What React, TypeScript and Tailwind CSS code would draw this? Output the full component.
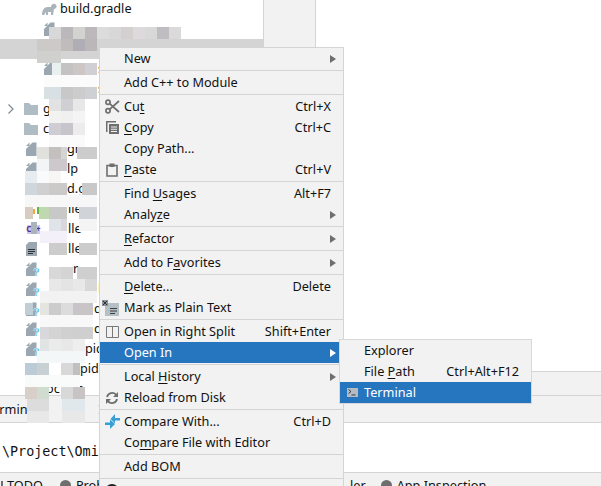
import type { ReactNode } from 'react';

const mosaic: [number, number, number, string][] = [
  // x, y, width, colour
  [49, 27, 12, '#d8d8d8'], [61, 27, 12, '#bab8ba'], [73, 27, 12, '#d2d2d0'], [85, 27, 12, '#bcb8bc'], [97, 27, 12, '#dcdcdc'],
  [109, 27, 12, '#d8d8d8'], [121, 27, 12, '#d4d0d0'], [133, 27, 12, '#dcdadc'], [145, 27, 12, '#d8d8d8'], [157, 27, 12, '#bfbcc2'], [169, 27, 12, '#dadada'],
  [37, 39, 24, '#cccac8'], [61, 39, 12, '#c0bcbc'], [73, 39, 12, '#b0aeb4'], [85, 39, 12, '#bbb6b8'], [37, 51, 24, '#d0d0ce'],
  [52, 63, 9, '#e8f0f0'], [61, 63, 12, '#c4c2c2'], [73, 63, 12, '#cdc6c6'], [85, 63, 12, '#d0d0d4'],
  [44, 75, 53, '#fbfbfb'],
  [44, 87, 17, '#d8e0e4'], [61, 87, 12, '#c8c8c8'], [73, 87, 12, '#cccccc'], [85, 87, 12, '#ced0d4'],
  [49, 99, 12, '#e2e2e2'], [61, 99, 12, '#d0d0d4'], [73, 99, 12, '#e8e8e8'],
  [49, 111, 12, '#f2f2f0'], [61, 111, 12, '#f0f0f0'], [73, 111, 12, '#f4f4f4'],
  [49, 123, 12, '#d0ccd4'], [61, 123, 12, '#c8c4cc'], [73, 123, 12, '#ececec'],
  [49, 135, 36, '#fafafa'],
  [37, 147, 12, '#e0e0dc'], [49, 147, 12, '#c4c0c0'], [61, 147, 6, '#d4d4d0'], [77, 147, 20, '#cccccc'],
  [37, 159, 12, '#f2f4f6'], [49, 159, 18, '#ccc8cc'],
  [25, 171, 12, '#e6ecf0'], [37, 171, 12, '#f8fafc'], [49, 171, 12, '#f8f6f4'],
  [25, 183, 12, '#cfd7da'], [37, 183, 12, '#d0d0d0'], [49, 183, 18, '#cccac8'], [82, 183, 15, '#c8c8c8'],
  [25, 195, 72, '#f7f7f7'],
  [25, 207, 8, '#d8ccc0'], [39, 207, 10, '#c0d8b0'], [49, 207, 18, '#c8c8c8'], [79, 207, 18, '#d0d4d8'],
  [49, 219, 12, '#e0e4e8'], [61, 219, 6, '#d8d8dc'], [79, 219, 18, '#f4f4f4'],
  [31, 222, 6, '#a9b4bb'],
  [40, 231, 27, '#f4f0fa'],
  [49, 243, 18, '#cccccc'], [79, 243, 18, '#cccccc'],
  [49, 267, 12, '#d8d8d8'], [61, 267, 12, '#d4d4d4'], [77, 267, 20, '#cfcfcf'],
  [49, 279, 12, '#e8e8e8'], [61, 279, 12, '#e4e4e4'], [73, 279, 12, '#e8e8e8'], [85, 279, 12, '#d8d8d8'],
  [40, 291, 57, '#f2f2f2'],
  [25, 303, 8, '#c0ced6'], [40, 303, 9, '#e4e4e0'], [49, 303, 12, '#cccccc'], [61, 303, 12, '#dcdcdc'], [73, 303, 20, '#c8c4c8'],
  [40, 315, 53, '#f8f8f8'],
  [40, 327, 9, '#d8d8dc'], [49, 327, 12, '#d4d4d4'], [61, 327, 12, '#d0d0d0'], [73, 327, 20, '#d0cfcf'],
  [40, 339, 9, '#e0e4e4'], [49, 339, 12, '#ecebeb'], [61, 339, 12, '#e8e8e8'], [73, 339, 12, '#eeeeee'],
  [37, 351, 48, '#f4f7f8'],
  [25, 363, 12, '#bcccd6'], [37, 363, 12, '#c8d0d4'], [61, 363, 12, '#d8d8d8'], [73, 363, 7, '#c0c0c0'],
  [25, 375, 55, '#f9fafa'],
  [25, 387, 12, '#d8d0c8'], [37, 387, 12, '#d0dcd0'], [61, 387, 12, '#d8d8d8'], [73, 387, 12, '#c8c4c4'],
  [27, 399, 22, '#dcdcdc'], [62, 399, 23, '#e0e8ec'],
  [27, 411, 22, '#e8e8e8'], [62, 411, 23, '#e8e8e8'],
];

function FileIcon({ children }: { children?: ReactNode }) {
  return (
    <svg width="14" height="15" viewBox="0 0 14 15" className="shrink-0">
      <path d="M6.500 0.500h4v13.500H0V7z" fill="#9aa7b0" />
      <path d="M0 4L3.500 0.500V4z" fill="#9aa7b0" />
      {children}
    </svg>
  );
}

const Question = () => (
  <text x="7" y="14" fontSize="11" fontWeight="700" fill="#40b6e0" fontFamily="Liberation Sans, sans-serif" stroke="#fff" strokeWidth="0.3">?</text>
);

const Folder = () => (
  <svg width="14" height="12" viewBox="0 0 14 12" className="shrink-0">
    <path d="M0 0h5l2 2h7v10H0z" fill="#b0bcc4" />
  </svg>
);

function TreeRow({ className, children }: { className?: string; children?: ReactNode }) {
  return <div className={`flex h-5 shrink-0 items-center whitespace-nowrap text-[#111] ${className ?? ''}`}>{children}</div>;
}

// one letter underlined, like a menu mnemonic
function Mn({ t }: { t: string }) {
  return <span className="underline decoration-1 underline-offset-2">{t}</span>;
}

function Arrow({ light }: { light?: boolean }) {
  return (
    <svg width="6" height="8" viewBox="0 0 6 8" className="shrink-0">
      <path d="M0 0l6 4-6 4z" fill={light ? '#ffffff' : '#6e6e6e'} />
    </svg>
  );
}

function Item({ icon, label, keys, arrow, active }: { icon?: ReactNode; label: ReactNode; keys?: string; arrow?: boolean; active?: boolean }) {
  return (
    <div className={`flex h-[21px] items-center ${active ? 'bg-[#2675bf] text-white' : 'text-[#111]'}`}>
      <span className="flex w-[24px] shrink-0 items-center justify-center">{icon}</span>
      <span className="flex-1 whitespace-nowrap">{label}</span>
      {keys && <span className="whitespace-nowrap pr-[12px]">{keys}</span>}
      {arrow && <span className="flex pr-[7px]"><Arrow light={active} /></span>}
    </div>
  );
}

const Sep = () => (
  <div className="flex h-[3px] items-center">
    <div className="h-px w-full bg-[#d4d4d4]" />
  </div>
);

const Scissors = () => (
  <svg width="15" height="15" viewBox="0 0 15 15" fill="none" stroke="#6e6e6e" strokeWidth="1.700">
    <circle cx="3" cy="3.200" r="2.100" />
    <circle cx="3" cy="11.800" r="2.100" />
    <path d="M4.600 4.600L14 13M4.600 10.400L14 2" />
  </svg>
);

const CopyIcon = () => (
  <svg width="13" height="13" viewBox="0 0 13 13">
    <path d="M0 0h10v1.500H1.500V11H0z" fill="#6e6e6e" />
    <path d="M3 3h10v10H3z" fill="#6e6e6e" />
    <path d="M5 5.500h6v1H5zM5 7.800h6v1H5zM5 10h6v1H5z" fill="#f2f2f2" />
  </svg>
);

const PasteIcon = () => (
  <svg width="12" height="14" viewBox="0 0 12 14" fill="none">
    <path d="M1 2.500h10v10.500H1z" stroke="#6e6e6e" strokeWidth="1.600" />
    <path d="M3.500 0.500h5v3.500h-5z" fill="#6e6e6e" />
  </svg>
);

const PlainText = () => (
  <svg width="18" height="16" viewBox="0 0 18 16" className="-ml-[3px]">
    <path d="M3 3h14v13H3z" fill="#b4bfc6" />
    <path d="M8 8h7v1H8zM8 10.500h7v1H8zM8 13h5v1H8z" fill="#3c4043" />
    <path d="M0 0h6v6H0z" fill="#8a9299" />
    <path d="M1 1l4 4M5 1L1 5" stroke="#2f3133" strokeWidth="1" />
  </svg>
);

const SplitIcon = () => (
  <svg width="13" height="12" viewBox="0 0 13 12" fill="none" stroke="#7a7a7a">
    <path d="M.5.500h12v11H.5zM6.500.500v11" />
  </svg>
);

const ReloadIcon = () => (
  <svg width="14" height="14" viewBox="0 0 14 14" fill="none">
    <path d="M2 6a5.200 5.200 0 0 1 9-2.400" stroke="#6e6e6e" strokeWidth="1.800" />
    <path d="M12 8a5.200 5.200 0 0 1-9 2.400" stroke="#6e6e6e" strokeWidth="1.800" />
    <path d="M13 1v5H8zM1 13V8h5z" fill="#6e6e6e" />
  </svg>
);

const CompareIcon = () => (
  <svg width="15" height="15" viewBox="0 0 15 15" fill="#389fd6">
    <path d="M0 8.500h6v2.500H0z" />
    <path d="M5 5.500L10 10 5 15z" />
    <path d="M9 4h6v2.500H9z" />
    <path d="M10 0v9.500L5.500 5z" />
  </svg>
);

const TerminalIcon = () => (
  <svg width="11" height="9" viewBox="0 0 11 9" className="ml-[1px]">
    <path d="M0 0h11v9H0z" fill="#b3bcc5" />
    <path d="M1.500 1.500L4 3.500 1.500 5.500" fill="none" stroke="#2b2f33" strokeWidth="0.900" />
    <path d="M4.500 6.500h4v.9h-4z" fill="#2b2f33" />
  </svg>
);

export default function App() {
  return (
    <div className="relative flex h-[486px] w-[601px] flex-col overflow-hidden bg-white font-['Noto_Sans',sans-serif] text-[12.7px]">
      {/* project tree + side panel */}
      <div className="flex h-[395px] shrink-0">
        <div className="flex w-[263px] shrink-0 flex-col">
          <div className="-mt-[1px] flex flex-col">
            <TreeRow className="pl-[42px]">
              <svg width="15" height="12" viewBox="0 0 15 12" className="mr-[3px] shrink-0">
                <path d="M0 12C0 7 2 4 6 4h3C9 2 11 0 13 1c2 1 2 3 1 4-1 1-2 1-2 1l-1 6H9V9H6v3H4V9l-2 3z" fill="#a9b4bb" />
              </svg>
              build.gradle
            </TreeRow>
            <TreeRow className="pl-[44px]"><FileIcon /></TreeRow>
            <TreeRow className="bg-[#d4d4d4]" />
            <TreeRow className="pl-[44px]"><FileIcon /><span className="ml-[40px]">s</span></TreeRow>
            <TreeRow className="pl-[44px]"><FileIcon /><span className="ml-[40px]">s</span></TreeRow>
            <TreeRow className="pl-[8px]">
              <svg width="6" height="10" viewBox="0 0 6 10" fill="none" stroke="#7f8b91" strokeWidth="1.200" className="mr-[10px] shrink-0"><path d="M.5.500L5 5 .5 9.500" /></svg>
              <Folder /><span className="ml-[5px]">g</span>
            </TreeRow>
            <TreeRow className="pl-[24px]"><Folder /><span className="ml-[5px]">c</span></TreeRow>
            <TreeRow className="pl-[26px]"><FileIcon /><span className="ml-[27px]">gn</span></TreeRow>
            <TreeRow className="pl-[26px]"><FileIcon /><span className="ml-[27px]">lp</span></TreeRow>
            <TreeRow className="pl-[26px]"><FileIcon /><span className="ml-[27px]">d.g</span></TreeRow>
            <TreeRow className="pl-[33px]">
              <svg width="7" height="10" viewBox="0 0 7 10" className="shrink-0"><path d="M0 5h2v5H0z" fill="#f4a83c" /><path d="M4 0h2.500v10H4z" fill="#62b543" /></svg>
              <span className="ml-[28px]">lle</span>
            </TreeRow>
            <TreeRow className="pl-[27px]">
              <span className="flex h-[9px] w-[13px] items-center justify-center bg-[#d4c4f4] text-[8px] font-bold leading-none text-[#4b3a86]">C++</span>
              <span className="ml-[28px]">lle</span>
            </TreeRow>
            <TreeRow className="pl-[26px]">
              <svg width="11" height="14" viewBox="0 0 11 14" className="shrink-0"><path d="M3 0h8v14H0V3z" fill="#9aa7b0" /><path d="M2 7h7v1H2zM2 9h7v1H2zM2 11h5v1H2z" fill="#2f3133" /></svg>
              <span className="ml-[31px]">lle</span>
            </TreeRow>
            <TreeRow className="pl-[26px]"><FileIcon><Question /></FileIcon><span className="ml-[33px]">r</span></TreeRow>
            <TreeRow className="pl-[26px]"><FileIcon><Question /></FileIcon><span className="ml-[58px] text-[#e08a20]">l</span></TreeRow>
            <TreeRow className="pl-[26px]"><FileIcon><Question /></FileIcon><span className="ml-[54px]">d</span></TreeRow>
            <TreeRow className="pl-[26px]"><FileIcon><Question /></FileIcon><span className="ml-[54px]">d</span></TreeRow>
            <TreeRow className="pl-[26px]"><FileIcon><Question /></FileIcon><span className="ml-[45px]">pid</span></TreeRow>
            <TreeRow className="pl-[80px]">pid</TreeRow>
            <TreeRow className="pl-[46px]">oc<span className="ml-[9px]">op</span></TreeRow>
          </div>
        </div>
        <div className="w-[53px] shrink-0 border-x border-[#d4d4d4] bg-[#f2f2f2]" />
        <div className="flex flex-1 flex-col">
          <div className="flex-1" />
          <div className="h-[24px] border-t border-[#d4d4d4] bg-[#f2f2f2]" />
        </div>
      </div>

      {/* tool window tabs */}
      <div className="flex h-[28px] shrink-0 items-center border-y border-[#d4d4d4] bg-[#f2f2f2] text-[#111]">
        <span className="-ml-[14px] flex items-center whitespace-nowrap pt-[1px]">
          Termin
          <span className="ml-[34px] text-[#c87a2a]">l</span>
          <svg width="5" height="9" viewBox="0 0 5 9" fill="none" stroke="#b4b8bb" className="ml-[33px]"><path d="M.5.500l4 4-4 4" /></svg>
        </span>
      </div>

      {/* console */}
      <div className="flex h-[49px] shrink-0 items-center overflow-hidden whitespace-nowrap pt-[10px] font-['DejaVu_Sans_Mono',monospace] text-[13.4px] text-[#111]">
        <span className="pl-[2px]">\Project\Omir</span>
      </div>

      {/* status bar */}
      <div className="flex h-[14px] shrink-0 items-start overflow-hidden whitespace-nowrap border-t border-[#d4d4d4] bg-[#f2f2f2] text-[#111]">
        <span className="ml-[1px] mt-[4px] flex items-center gap-[4px] leading-[16px]">
          <span className="h-[8px] w-[2px] bg-[#6e6e6e]" />
          TODO
        </span>
        <span className="ml-[17px] mt-[4px] flex items-center gap-[5px] leading-[16px]">
          <span className="h-[11px] w-[11px] rounded-full bg-[#6e6e6e]" />
          Prob
        </span>
        <span className="ml-[246px] mt-[4px] leading-[16px]">ler</span>
        <span className="ml-[15px] mt-[4px] flex items-center gap-[5px] leading-[16px]">
          <span className="h-[11px] w-[11px] rounded-full bg-[#6e6e6e]" />
          App Inspection
        </span>
      </div>

      {/* pixelated blur over the tree */}
      <svg width="601" height="486" viewBox="0 0 601 486" className="pointer-events-none absolute left-0 top-0">
        {mosaic.map(([x, y, w, c], i) => (
          <rect key={i} x={x} y={y} width={w} height={12} fill={c} />
        ))}
      </svg>

      {/* context menu */}
      <div className="absolute left-[99px] top-[47px] h-[450px] w-[245px] border border-[#d4d4d4] bg-[#f2f2f2]">
        <Item label="New" arrow />
        <Sep />
        <Item label="Add C++ to Module" />
        <Sep />
        <Item icon={<Scissors />} label={<>Cu<Mn t="t" /></>} keys="Ctrl+X" />
        <Item icon={<CopyIcon />} label={<><Mn t="C" />opy</>} keys="Ctrl+C" />
        <Item label="Copy Path..." />
        <Item icon={<PasteIcon />} label={<><Mn t="P" />aste</>} keys="Ctrl+V" />
        <Sep />
        <Item label={<>Find <Mn t="U" />sages</>} keys="Alt+F7" />
        <Item label={<>Analy<Mn t="z" />e</>} arrow />
        <Sep />
        <Item label={<><Mn t="R" />efactor</>} arrow />
        <Sep />
        <Item label={<>Add to F<Mn t="a" />vorites</>} arrow />
        <Sep />
        <Item label={<><Mn t="D" />elete...</>} keys="Delete" />
        <Item icon={<PlainText />} label="Mark as Plain Text" />
        <Sep />
        <Item icon={<SplitIcon />} label="Open in Right Split" keys="Shift+Enter" />
        <Item label="Open In" arrow active />
        <Sep />
        <Item label={<>Local <Mn t="H" />istory</>} arrow />
        <Item icon={<ReloadIcon />} label="Reload from Disk" />
        <Sep />
        <Item icon={<CompareIcon />} label="Compare With..." keys="Ctrl+D" />
        <Item label={<>Co<Mn t="m" />pare File with Editor</>} />
        <Sep />
        <Item label="Add BOM" />
        <Sep />
        <Item icon={<span className="block h-[14px] w-[14px] rounded-full bg-[#222]" />} label="" />
      </div>

      {/* Open In submenu */}
      <div className="absolute left-[339px] top-[339px] w-[193px] border border-[#d8d8d8] bg-[#f2f2f2]">
        <Item label="Explorer" />
        <Item label={<>File <Mn t="P" />ath</>} keys="Ctrl+Alt+F12" />
        <Item icon={<TerminalIcon />} label="Terminal" active />
      </div>
    </div>
  );
}
